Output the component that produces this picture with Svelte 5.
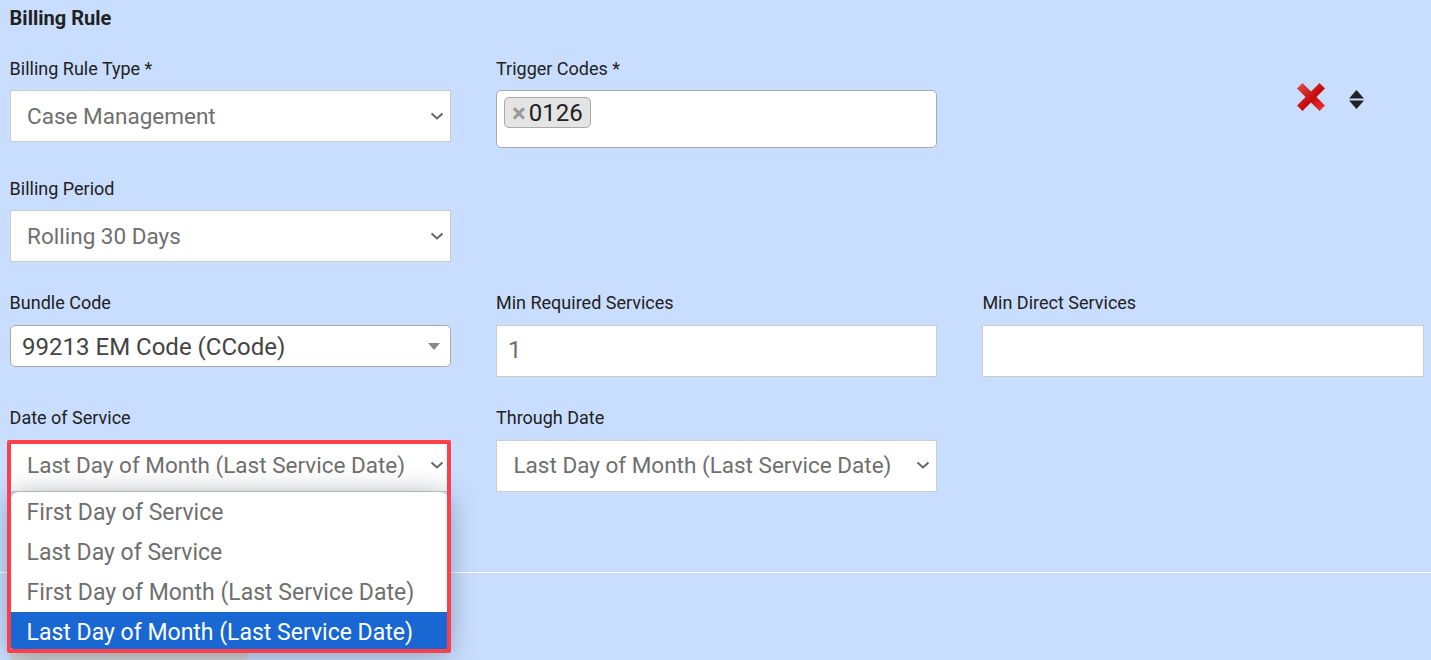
<script>
  const options = [
    'First Day of Service',
    'Last Day of Service',
    'First Day of Month (Last Service Date)',
    'Last Day of Month (Last Service Date)'
  ];
  const selected = options[3];
</script>

<div class="page">
  <div class="title">Billing Rule</div>

  <div class="grid row-1">
    <div class="field">
      <div class="label">Billing Rule Type *</div>
      <div class="select">
        <span>Case Management</span>
        <svg class="chev" viewBox="0 0 14 8"><path d="M1.500 1.500 7 6.500l5.500-5" /></svg>
      </div>
    </div>
    <div class="field">
      <div class="label">Trigger Codes *</div>
      <div class="multi">
        <span class="tag"><span class="tag-x">×</span>0126</span>
      </div>
    </div>
    <div class="actions">
      <svg class="del" viewBox="0 0 30 30">
        <defs>
          <linearGradient id="redx" x1="0" y1="0" x2="1" y2="1">
            <stop offset="0" stop-color="#d95050" />
            <stop offset="0.55" stop-color="#c80c0c" />
            <stop offset="1" stop-color="#f23a3a" />
          </linearGradient>
        </defs>
        <path d="M1 6.500 6.500 1 15 9.500 23.500 1 29 6.500 20.500 15 29 23.500 23.500 29 15 20.500 6.500 29 1 23.500 9.500 15z" fill="url(#redx)" />
      </svg>
      <svg class="sort" viewBox="0 0 15 19">
        <path d="M7.500 0 15 8.500H0zM7.500 19 0 10.500H15z" fill="#222" />
      </svg>
    </div>
  </div>

  <div class="grid row-2">
    <div class="field">
      <div class="label">Billing Period</div>
      <div class="select">
        <span>Rolling 30 Days</span>
        <svg class="chev" viewBox="0 0 14 8"><path d="M1.500 1.500 7 6.500l5.500-5" /></svg>
      </div>
    </div>
  </div>

  <div class="grid row-3">
    <div class="field">
      <div class="label">Bundle Code</div>
      <div class="combo">
        <span>99213 EM Code (CCode)</span>
        <i class="caret"></i>
      </div>
    </div>
    <div class="field">
      <div class="label">Min Required Services</div>
      <div class="select num">1</div>
    </div>
    <div class="field">
      <div class="label">Min Direct Services</div>
      <div class="select"></div>
    </div>
  </div>

  <div class="grid row-4">
    <div class="field">
      <div class="label">Date of Service</div>
      <div class="select">
        <span>{selected}</span>
        <svg class="chev" viewBox="0 0 14 8"><path d="M1.500 1.500 7 6.500l5.500-5" /></svg>
      </div>
      <div class="menu">
        {#each options as opt}
          <div class="option" class:active={opt === selected}>{opt}</div>
        {/each}
      </div>
      <div class="highlight"></div>
    </div>
    <div class="field">
      <div class="label">Through Date</div>
      <div class="select">
        <span>{selected}</span>
        <svg class="chev" viewBox="0 0 14 8"><path d="M1.500 1.500 7 6.500l5.500-5" /></svg>
      </div>
    </div>
  </div>

  <hr />
  <div class="btn-peek"></div>
</div>

<style>
  :global(body) {
    margin: 0;
    background: #c9deff;
    overflow: hidden;
  }

  .page {
    height: 660px;
    box-sizing: border-box;
    padding: 8px 7px 0 9.600px;
    font-family: Roboto, sans-serif;
    color: #212121;
    position: relative;
    overflow: hidden;
  }

  .title {
    font-size: 20px;
    font-weight: 700;
    line-height: 20px;
    margin-bottom: 30px;
  }

  .grid {
    display: grid;
    grid-template-columns: repeat(3, 441.500px);
    column-gap: 44.900px;
  }

  .row-1 {
    height: 120px;
  }

  .row-2 {
    height: 115px;
  }

  .row-3 {
    height: 115px;
  }

  .label {
    font-size: 18px;
    line-height: 20px;
    padding-top: 1px;
    margin-bottom: 11px;
  }

  .row-3 .label,
  .row-4 .label {
    padding-top: 0;
    margin-bottom: 12px;
  }

  .field {
    position: relative;
  }

  .select {
    height: 52px;
    box-sizing: border-box;
    background: #fff;
    border: 1px solid #ccc;
    display: flex;
    align-items: center;
    justify-content: space-between;
    padding: 0 6px 0 16.500px;
    font-size: 22.500px;
    color: #6f6f6f;
    white-space: nowrap;
  }

  .row-4 .select {
    padding-bottom: 2px;
  }

  .num {
    padding: 0 0 2px 11px;
    font-size: 24px;
  }

  .chev {
    width: 14px;
    height: 8px;
    fill: none;
    stroke: #666;
    stroke-width: 2;
  }

  .multi {
    height: 58px;
    box-sizing: border-box;
    background: #fff;
    border: 1px solid #aaa;
    border-radius: 5px;
    padding: 6px 7px;
  }

  .tag {
    display: inline-flex;
    align-items: center;
    height: 31px;
    box-sizing: border-box;
    padding: 0 7px 0 7px;
    background: #e4e4e4;
    border: 1px solid #aaa;
    border-radius: 5px;
    font-size: 24px;
    color: #212121;
  }

  .tag-x {
    color: #999;
    font-weight: 700;
    font-size: 26px;
    line-height: 24px;
    margin-right: 3px;
  }

  .combo {
    height: 42px;
    box-sizing: border-box;
    background: #fff;
    border: 1px solid #aaa;
    border-radius: 5px;
    display: flex;
    align-items: center;
    justify-content: space-between;
    padding: 2px 10px 0 11.500px;
    font-size: 24px;
    color: #444;
    white-space: nowrap;
  }

  .caret {
    width: 0;
    height: 0;
    margin-top: -2px;
    border-left: 6px solid transparent;
    border-right: 6px solid transparent;
    border-top: 7px solid #888;
  }

  .actions {
    display: flex;
    align-items: flex-start;
    gap: 23px;
    padding: 24px 0 0 314px;
  }

  .del {
    width: 30px;
    height: 30px;
    flex: none;
    filter: blur(0.6px);
  }

  .sort {
    width: 15px;
    height: 19px;
    flex: none;
    margin-top: 8px;
  }

  .menu {
    position: absolute;
    left: 1px;
    top: 84px;
    width: 437px;
    height: 157px;
    background: #fff;
    border-radius: 8px 8px 2px 2px;
    overflow: hidden;
    box-shadow: 0 4px 28px rgba(40, 50, 70, 0.45);
    z-index: 2;
  }

  .highlight {
    position: absolute;
    left: -3px;
    top: 32px;
    width: 444px;
    height: 213px;
    box-sizing: border-box;
    border: 4px solid #fb4049;
    border-radius: 2px;
    z-index: 3;
  }

  .option {
    height: 40px;
    box-sizing: border-box;
    padding: 1px 0 0 16px;
    font-size: 23px;
    line-height: 40px;
    color: #6f6f6f;
    white-space: nowrap;
  }

  .option.active {
    background: #1967d2;
    color: #fff;
  }

  hr {
    position: absolute;
    left: 0;
    right: 0;
    top: 572px;
    margin: 0;
    border: 0;
    border-top: 1px solid #fff;
  }

  .btn-peek {
    position: absolute;
    left: 10px;
    top: 650px;
    width: 238px;
    height: 10px;
    background: #d2d2d2;
    border-radius: 4px;
  }
</style>
